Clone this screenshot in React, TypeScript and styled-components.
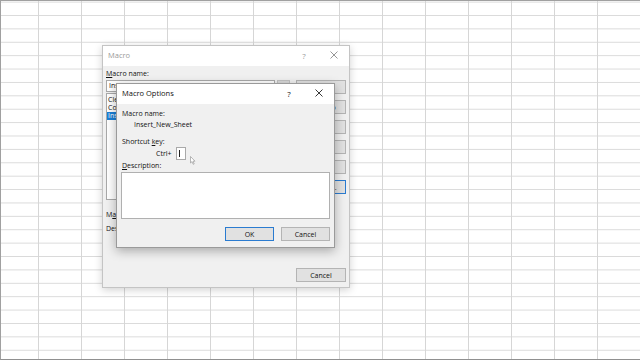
import React from 'react'
import styled, { createGlobalStyle } from 'styled-components'

const GlobalStyle = createGlobalStyle`
  html, body {
    margin: 0;
    padding: 0;
  }
  body {
    font-family: 'Open Sans', 'Noto Sans', sans-serif;
    color: #111;
  }
`

const Sheet = styled.div`
  position: relative;
  width: 640px;
  height: 360px;
  box-sizing: border-box;
  overflow: hidden;
  background-color: #fff;
  background-image: linear-gradient(to right, #d6d6d6 1px, transparent 1px),
    linear-gradient(to bottom, #dadada 1px, transparent 1px);
  background-size: 43px 100%, 100% 13.4px;
  background-position: 37px 0, 0 14px;
  border-top: 1px solid #a0a0a0;
  border-left: 1px solid #a0a0a0;
  border-bottom: 1px solid #909090;
`

const Window = styled.div<{ $x: number; $y: number; $w: number; $h: number; $active?: boolean }>`
  position: absolute;
  left: ${p => p.$x}px;
  top: ${p => p.$y}px;
  width: ${p => p.$w}px;
  height: ${p => p.$h}px;
  box-sizing: border-box;
  display: flex;
  flex-direction: column;
  background: #f0f0f0;
  border: 1px solid ${p => (p.$active ? '#9a9a9a' : '#c4c4c4')};
  box-shadow: ${p =>
    p.$active ? '0 3px 10px rgba(0, 0, 0, 0.3)' : '0 2px 8px rgba(0, 0, 0, 0.18)'};
`

const TitleBar = styled.div<{ $active?: boolean }>`
  height: 20px;
  flex: none;
  display: flex;
  align-items: center;
  background: #fff;
  padding-left: 5px;
  padding-bottom: 2px;
  box-sizing: border-box;
  font-size: 7.5px;
  color: ${p => (p.$active ? '#111' : '#9a9a9a')};
`

const TitleText = styled.span`
  flex: 1;
`

const TitleButton = styled.span`
  width: 30px;
  height: 100%;
  display: flex;
  align-items: center;
  justify-content: center;
  font-size: 8px;
`

const MacroBody = styled.div`
  flex: 1;
  display: flex;
  gap: 6px;
  padding: 4px 3px 5px 3px;
`

const LeftCol = styled.div`
  flex: 1;
  display: flex;
  flex-direction: column;
`

const RightCol = styled.div`
  width: 50px;
  display: flex;
  flex-direction: column;
  gap: 6px;
  padding-top: 10px;
`

const Label = styled.div<{ $indent?: number; $mt?: number }>`
  height: 8px;
  line-height: 8px;
  font-size: 7px;
  white-space: nowrap;
  padding-left: ${p => p.$indent ?? 0}px;
  margin-top: ${p => p.$mt ?? 0}px;
`

const Key = styled.span`
  text-decoration: underline;
`

const NameRow = styled.div`
  display: flex;
  gap: 2px;
  margin-top: 2px;
  height: 12px;
`

const TextBox = styled.div`
  flex: 1;
  box-sizing: border-box;
  background: #fff;
  border: 1px solid #a9a9a9;
  font-size: 7px;
  line-height: 10px;
  padding-left: 2px;
  white-space: nowrap;
  overflow: hidden;
`

const SmallButton = styled.div`
  width: 13px;
  box-sizing: border-box;
  background: #d9d9d9;
  border: 1px solid #c2c2c2;
`

const ListBox = styled.div`
  height: 107px;
  margin-top: 1px;
  box-sizing: border-box;
  background: #fff;
  border: 1px solid #a9a9a9;
  padding-top: 2px;
  display: flex;
  flex-direction: column;
`

const ListItem = styled.div<{ $selected?: boolean }>`
  height: 8px;
  line-height: 8px;
  font-size: 7px;
  padding-left: 1px;
  white-space: nowrap;
  background: ${p => (p.$selected ? '#1a7fd6' : 'transparent')};
  color: ${p => (p.$selected ? '#fff' : '#111')};
`

const Spacer = styled.div`
  flex: 1;
`

const Button = styled.div<{ $default?: boolean; $w?: number }>`
  width: ${p => (p.$w ? `${p.$w}px` : '100%')};
  height: 14px;
  box-sizing: border-box;
  flex: none;
  display: flex;
  align-items: center;
  justify-content: center;
  background: #e1e1e1;
  border: ${p => (p.$default ? '1.5px solid #2a7bd0' : '1px solid #b4b4b4')};
  font-size: 7px;
  color: #111;
`

const OptionsBody = styled.div`
  flex: 1;
  display: flex;
  flex-direction: column;
  padding: 6px 4px 5px 4px;
`

const CtrlRow = styled.div`
  display: flex;
  align-items: center;
  gap: 4px;
  height: 13px;
  padding-left: 35px;
  margin-top: 1px;
  font-size: 7px;
`

const KeyInput = styled.div`
  position: relative;
  width: 10px;
  height: 13px;
  box-sizing: border-box;
  background: #fff;
  border: 1px solid #a9a9a9;
`

const Caret = styled.span`
  position: absolute;
  left: 2px;
  top: 2px;
  width: 1px;
  height: 7px;
  background: #222;
`

const DescriptionBox = styled.div`
  height: 47px;
  margin-top: 2px;
  box-sizing: border-box;
  background: #fff;
  border: 1px solid #b0b0b0;
`

const ButtonRow = styled.div`
  display: flex;
  justify-content: flex-end;
  gap: 7px;
  margin-top: 8px;
`

const Pointer = styled.svg`
  position: absolute;
  left: 189px;
  top: 155px;
`

const CloseIcon = ({ color }: { color: string }) => (
  <svg width="8" height="8" viewBox="0 0 8 8">
    <path d="M0.5 0.5 L7.5 7.5 M7.5 0.5 L0.5 7.5" stroke={color} strokeWidth="0.9" fill="none" />
  </svg>
)

const App = () => (
  <>
    <GlobalStyle />
    <Sheet>
      <Window $x={101} $y={44} $w={248} $h={243}>
        <TitleBar>
          <TitleText>Macro</TitleText>
          <TitleButton>?</TitleButton>
          <TitleButton>
            <CloseIcon color="#8a8a8a" />
          </TitleButton>
        </TitleBar>
        <MacroBody>
          <LeftCol>
            <Label>
              <Key>M</Key>acro name:
            </Label>
            <NameRow>
              <TextBox>Insert_New_Sheet</TextBox>
              <SmallButton />
            </NameRow>
            <ListBox>
              <ListItem>Clear_Sheet</ListItem>
              <ListItem>Copy_Data</ListItem>
              <ListItem $selected>Insert_New_Sheet</ListItem>
            </ListBox>
            <Label $mt={11}>
              M<Key>a</Key>cros in:
            </Label>
            <Label $mt={6}>Description</Label>
          </LeftCol>
          <RightCol>
            <Button>Run</Button>
            <Button>Step Into</Button>
            <Button>Edit</Button>
            <Button>Create</Button>
            <Button>Delete</Button>
            <Button $default>Options...</Button>
            <Spacer />
            <Button>Cancel</Button>
          </RightCol>
        </MacroBody>
      </Window>

      <Window $x={115} $y={82} $w={219} $h={165} $active>
        <TitleBar $active>
          <TitleText>Macro Options</TitleText>
          <TitleButton>?</TitleButton>
          <TitleButton>
            <CloseIcon color="#222" />
          </TitleButton>
        </TitleBar>
        <OptionsBody>
          <Label $indent={1}>Macro name:</Label>
          <Label $indent={13} $mt={3}>
            Insert_New_Sheet
          </Label>
          <Label $indent={1} $mt={9}>
            Shortcut <Key>k</Key>ey:
          </Label>
          <CtrlRow>
            <span>Ctrl+</span>
            <KeyInput>
              <Caret />
            </KeyInput>
          </CtrlRow>
          <Label $indent={1} $mt={2}>
            <Key>D</Key>escription:
          </Label>
          <DescriptionBox />
          <ButtonRow>
            <Button $default $w={49}>
              OK
            </Button>
            <Button $w={49}>Cancel</Button>
          </ButtonRow>
        </OptionsBody>
      </Window>

      <Pointer width="6" height="9" viewBox="0 0 6 9">
        <path d="M0.5 0.5 L0.5 7 L2 5.6 L3.2 8.3 L4.2 7.9 L3 5.2 L5 5.2 Z" fill="#fff" stroke="#9a9a9a" strokeWidth="0.7" />
      </Pointer>
    </Sheet>
  </>
)

export default App
